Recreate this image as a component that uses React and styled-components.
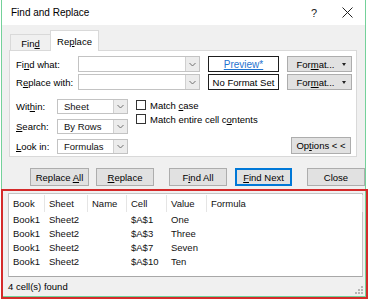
import React from 'react';
import styled, { createGlobalStyle } from 'styled-components';

const Global = createGlobalStyle`
  html, body { margin: 0; padding: 0; background: #fff; }
  body { font-family: "Liberation Sans", Arial, sans-serif; font-size: 9.5px; color: #000; }
  * { box-sizing: border-box; }
  u { text-decoration-thickness: 1px; text-underline-offset: 1px; }
`;

const Stage = styled.div`
  position: relative;
  width: 370px;
  height: 300px;
  overflow: hidden;
  background: #fff;
`;

const Window = styled.div`
  margin-left: 1px;
  width: 365px;
  height: 297px;
  border: 1px solid #74d19a;
  border-top: none;
  background: #f0f0f0;
  display: flex;
  flex-direction: column;
`;

const TitleBar = styled.div`
  height: 25px;
  flex: none;
  background: #fff;
  display: flex;
  align-items: center;
  padding-left: 9px;
  font-size: 10px;
`;

const TitleText = styled.span`
  flex: 1;
`;

const TitleButton = styled.div`
  width: ${p => p.$w}px;
  height: 25px;
  display: flex;
  align-items: center;
  justify-content: center;
  font-size: 11px;
  color: #222;
`;

const Body = styled.div`
  padding-left: 7px;
  display: flex;
  flex-direction: column;
`;

const TabStrip = styled.div`
  margin-top: 5px;
  height: 20px;
  padding-left: 1px;
  display: flex;
  align-items: flex-end;
`;

const Tab = styled.div`
  width: ${p => p.$w}px;
  height: ${p => (p.$active ? 21 : 16)}px;
  margin-bottom: ${p => (p.$active ? -1 : 0)}px;
  position: relative;
  z-index: ${p => (p.$active ? 2 : 1)};
  background: ${p => (p.$active ? '#fff' : '#f0f0f0')};
  border: 1px solid #d9d9d9;
  border-bottom: none;
  margin-left: ${p => (p.$active ? -1 : 0)}px;
  display: flex;
  align-items: center;
  justify-content: center;
  padding-top: ${p => (p.$active ? 0 : 1)}px;
`;

const Panel = styled.div`
  width: 348px;
  height: 107px;
  background: #fff;
  border: 1px solid #d9d9d9;
  padding: 5px 0 0 6px;
  display: flex;
  flex-direction: column;
  gap: 2px;
`;

const FieldRow = styled.div`
  display: flex;
  align-items: center;
  height: ${p => p.$h || 16}px;
`;

const Label = styled.div`
  width: ${p => p.$w}px;
  flex: none;
  white-space: nowrap;
`;

const Combo = styled.div`
  width: ${p => p.$w}px;
  height: ${p => p.$h || 16}px;
  flex: none;
  display: flex;
  border: 1px solid #c3c3c3;
  background: #fff;
`;

const ComboText = styled.div`
  flex: 1;
  display: flex;
  align-items: center;
  padding-left: 6px;
  color: #111;
`;

const ComboArrow = styled.div`
  width: 14px;
  flex: none;
  background: #ececec;
  border-left: 1px solid #d0d0d0;
  display: flex;
  align-items: center;
  justify-content: center;
`;

const FormatBox = styled.div`
  width: 71px;
  height: 16px;
  flex: none;
  margin-left: 8px;
  border: 1px solid #1e1e1e;
  display: flex;
  align-items: center;
  justify-content: center;
  color: ${p => (p.$link ? '#1f73d0' : '#000')};
  text-decoration: ${p => (p.$link ? 'underline' : 'none')};
  font-size: ${p => (p.$link ? 10 : 9.5)}px;
`;

const Button = styled.div`
  width: ${p => p.$w}px;
  height: ${p => p.$h || 18}px;
  flex: none;
  margin-left: ${p => p.$ml || 0}px;
  background: #e1e1e1;
  border: 1px solid ${p => (p.$default ? '#0078d7' : '#adadad')};
  box-shadow: ${p => (p.$default ? 'inset 0 0 0 1px #0078d7' : 'none')};
  display: flex;
  align-items: center;
  justify-content: center;
  position: relative;
  padding-right: ${p => p.$pr || 0}px;
  white-space: pre;
`;

const Caret = styled.span`
  position: absolute;
  right: 5px;
  top: 6px;
  width: 0;
  height: 0;
  border-left: 2.5px solid transparent;
  border-right: 2.5px solid transparent;
  border-top: 3px solid #222;
`;

const OptionsArea = styled.div`
  margin-top: 7px;
  display: flex;
  align-items: flex-start;
`;

const ComboColumn = styled.div`
  display: flex;
  flex-direction: column;
  gap: 5px;
`;

const CheckColumn = styled.div`
  margin-left: 8px;
  padding-top: 1px;
  display: flex;
  flex-direction: column;
  gap: 4px;
`;

const CheckRow = styled.div`
  display: flex;
  align-items: center;
  gap: 4px;
  height: 10px;
`;

const Box = styled.div`
  width: 10px;
  height: 10px;
  border: 1px solid #333;
  background: #fff;
`;

const OptionsButton = styled(Button)`
  margin-left: auto;
  margin-right: 5px;
  align-self: flex-end;
  margin-top: 38px;
`;

const ButtonRow = styled.div`
  margin-top: 11px;
  padding-left: 21px;
  display: flex;
`;

const List = styled.div`
  margin: 7px 0 0 6px;
  width: 355px;
  height: 84px;
  background: #fff;
  border: 1px solid #c4c4c4;
  border-bottom-color: #a8a8a8;
  display: flex;
  flex-direction: column;
`;

const Grid = styled.div`
  display: grid;
  grid-template-columns: 36px 43px 39px 40px 40px 156px;
`;

const HeadCell = styled.div`
  height: 17px;
  margin-top: 1px;
  display: flex;
  align-items: center;
  padding-left: 4px;
  border-right: 1px solid #e5e5e5;
  color: #111;
`;

const Cell = styled.div`
  height: 14px;
  display: flex;
  align-items: center;
  padding-left: 4px;
  color: #111;
`;

const StatusBar = styled.div`
  height: 18px;
  padding-left: 6px;
  display: flex;
  align-items: center;
  position: relative;
`;

const Grip = styled.svg`
  position: absolute;
  right: 2px;
  bottom: 1px;
`;

const Annotation = styled.div`
  position: absolute;
  left: 1px;
  top: 189px;
  width: 367px;
  height: 110px;
  border: 2px solid #d42a2a;
  pointer-events: none;
`;

const Chevron = () => (
  <svg width="7" height="5" viewBox="0 0 7 5">
    <path d="M0.5 1 L3.5 4 L6.5 1" fill="none" stroke="#707070" strokeWidth="1" />
  </svg>
);

const rows = [
  ['Book1', 'Sheet2', '', '$A$1', 'One', ''],
  ['Book1', 'Sheet2', '', '$A$3', 'Three', ''],
  ['Book1', 'Sheet2', '', '$A$7', 'Seven', ''],
  ['Book1', 'Sheet2', '', '$A$10', 'Ten', ''],
];

export default function App() {
  return (
    <Stage>
      <Global />
      <Window>
        <TitleBar>
          <TitleText>Find and Replace</TitleText>
          <TitleButton $w={30}>?</TitleButton>
          <TitleButton $w={36}>
            <svg width="11" height="11" viewBox="0 0 11 11">
              <path d="M0.5 0.5 L10.5 10.5 M10.5 0.5 L0.5 10.5" stroke="#222" strokeWidth="1" />
            </svg>
          </TitleButton>
        </TitleBar>
        <Body>
          <TabStrip>
            <Tab $w={41}><span>Fin<u>d</u></span></Tab>
            <Tab $w={49} $active><span>Re<u>p</u>lace</span></Tab>
          </TabStrip>
          <Panel>
            <FieldRow>
              <Label $w={62}>Fi<u>n</u>d what:</Label>
              <Combo $w={122}>
                <ComboText />
                <ComboArrow><Chevron /></ComboArrow>
              </Combo>
              <FormatBox $link>Preview*</FormatBox>
              <Button $w={65} $h={16} $ml={8} $pr={8}><span>For<u>m</u>at...</span><Caret /></Button>
            </FieldRow>
            <FieldRow>
              <Label $w={62}>R<u>e</u>place with:</Label>
              <Combo $w={122}>
                <ComboText />
                <ComboArrow><Chevron /></ComboArrow>
              </Combo>
              <FormatBox>No Format Set</FormatBox>
              <Button $w={65} $h={16} $ml={8} $pr={8}><span>For<u>m</u>at...</span><Caret /></Button>
            </FieldRow>
            <OptionsArea>
              <ComboColumn>
                {[
                  [<>Wit<u>h</u>in:</>, 'Sheet'],
                  [<><u>S</u>earch:</>, 'By Rows'],
                  [<><u>L</u>ook in:</>, 'Formulas'],
                ].map(([label, value], i) => (
                  <FieldRow key={i} $h={15}>
                    <Label $w={41}>{label}</Label>
                    <Combo $w={71} $h={15}>
                      <ComboText>{value}</ComboText>
                      <ComboArrow><Chevron /></ComboArrow>
                    </Combo>
                  </FieldRow>
                ))}
              </ComboColumn>
              <CheckColumn>
                <CheckRow><Box /><span>Match <u>c</u>ase</span></CheckRow>
                <CheckRow><Box /><span>Match entire cell c<u>o</u>ntents</span></CheckRow>
              </CheckColumn>
              <OptionsButton $w={60} $h={17}><span>Op<u>t</u>ions &lt; &lt;</span></OptionsButton>
            </OptionsArea>
          </Panel>
          <ButtonRow>
            <Button $w={59}><span>Replace <u>A</u>ll</span></Button>
            <Button $w={58} $ml={7}><span><u>R</u>eplace</span></Button>
            <Button $w={58} $ml={15}><span>F<u>i</u>nd All</span></Button>
            <Button $w={57} $ml={8} $default><span><u>F</u>ind Next</span></Button>
            <Button $w={58} $ml={15}><span>Close</span></Button>
          </ButtonRow>
        </Body>
        <List>
          <Grid>
            {['Book', 'Sheet', 'Name', 'Cell', 'Value', 'Formula'].map(h => (
              <HeadCell key={h}>{h}</HeadCell>
            ))}
            {rows.map((r, i) =>
              r.map((c, j) => <Cell key={i + '-' + j}>{c}</Cell>)
            )}
          </Grid>
        </List>
        <StatusBar>
          4 cell(s) found
          <Grip width="8" height="8" viewBox="0 0 8 8">
            <rect x="6" y="0" width="2" height="2" fill="#b5b5b5" />
            <rect x="3" y="3" width="2" height="2" fill="#b5b5b5" />
            <rect x="6" y="3" width="2" height="2" fill="#b5b5b5" />
            <rect x="0" y="6" width="2" height="2" fill="#b5b5b5" />
            <rect x="3" y="6" width="2" height="2" fill="#b5b5b5" />
            <rect x="6" y="6" width="2" height="2" fill="#b5b5b5" />
          </Grip>
        </StatusBar>
      </Window>
      <Annotation />
    </Stage>
  );
}
